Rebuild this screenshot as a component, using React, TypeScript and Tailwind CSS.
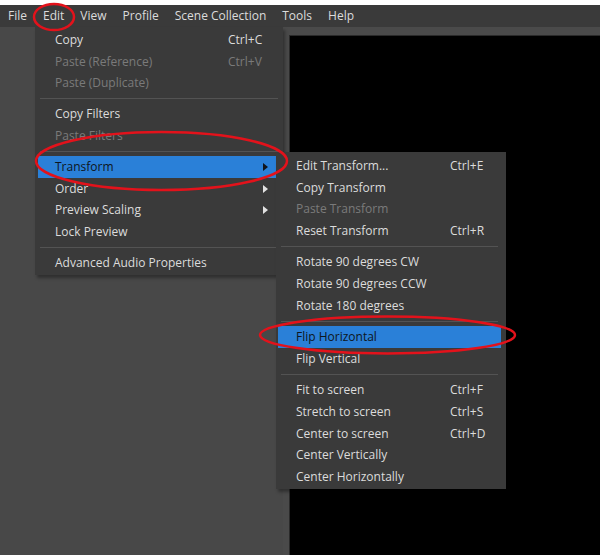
import React from "react";

type Item =
  | { sep: true }
  | { label: string; shortcut?: string; disabled?: boolean; active?: boolean; sub?: boolean; sep?: false };

const editItems: Item[] = [
  { label: "Copy", shortcut: "Ctrl+C" },
  { label: "Paste (Reference)", shortcut: "Ctrl+V", disabled: true },
  { label: "Paste (Duplicate)", disabled: true },
  { sep: true },
  { label: "Copy Filters" },
  { label: "Paste Filters", disabled: true },
  { sep: true },
  { label: "Transform", sub: true, active: true },
  { label: "Order", sub: true },
  { label: "Preview Scaling", sub: true },
  { label: "Lock Preview" },
  { sep: true },
  { label: "Advanced Audio Properties" },
];

const transformItems: Item[] = [
  { label: "Edit Transform...", shortcut: "Ctrl+E" },
  { label: "Copy Transform" },
  { label: "Paste Transform", disabled: true },
  { label: "Reset Transform", shortcut: "Ctrl+R" },
  { sep: true },
  { label: "Rotate 90 degrees CW" },
  { label: "Rotate 90 degrees CCW" },
  { label: "Rotate 180 degrees" },
  { sep: true },
  { label: "Flip Horizontal", active: true },
  { label: "Flip Vertical" },
  { sep: true },
  { label: "Fit to screen", shortcut: "Ctrl+F" },
  { label: "Stretch to screen", shortcut: "Ctrl+S" },
  { label: "Center to screen", shortcut: "Ctrl+D" },
  { label: "Center Vertically" },
  { label: "Center Horizontally" },
];

function Arrow({ dark }: { dark?: boolean }) {
  return (
    <svg width="5" height="8" viewBox="0 0 5 8" className="ml-auto mr-[15px]">
      <polygon points="0,0 5,4 0,8" fill={dark ? "#10151c" : "#e2e2e2"} />
    </svg>
  );
}

function Menu({
  items,
  rowMl,
  rowMr,
  textPl,
  textW,
  sepMl,
  sepMr,
  sepH,
}: {
  items: Item[];
  rowMl: string;
  rowMr: string;
  textPl: string;
  textW: string;
  sepMl: string;
  sepMr: string;
  sepH: string;
}) {
  return (
    <>
      {items.map((it, i) => {
        if ("sep" in it && it.sep) {
          return (
            <div key={i} className={`${sepH} flex items-center ${sepMl} ${sepMr}`}>
              <div className="h-px w-full bg-[#535353]" />
            </div>
          );
        }
        const item = it as Exclude<Item, { sep: true }>;
        const color = item.active
          ? "text-[#0e1620] bg-[#2a80d8]"
          : item.disabled
          ? "text-[#7a7a7a]"
          : "text-[#dcdcdc]";
        return (
          <div key={i} className={`h-[21.7px] flex items-center ${rowMl} ${rowMr} ${textPl} ${color}`}>
            <span className={`${textW} shrink-0 whitespace-nowrap`}>{item.label}</span>
            {item.shortcut && <span className="whitespace-nowrap">{item.shortcut}</span>}
            {item.sub && <Arrow dark={item.active} />}
          </div>
        );
      })}
    </>
  );
}

export default function App() {
  return (
    <div
      className="relative w-[600px] h-[555px] overflow-hidden bg-white text-[12px] leading-none"
      style={{ fontFamily: '"Open Sans", "Noto Sans", sans-serif' }}
    >
      <div className="h-[5px] bg-white" />
      <div className="h-[22px] bg-[#3a3a3a] flex items-center text-[#dcdcdc]">
        {["File", "Edit", "View", "Profile", "Scene Collection", "Tools", "Help"].map((m) => (
          <span key={m} className="px-2 whitespace-nowrap">
            {m}
          </span>
        ))}
      </div>
      <div className="flex h-[528px] bg-[#484848]">
        <div className="w-[283px] shrink-0" />
        <div className="flex-1 flex flex-col pt-[8px] pl-[6px] bg-[#4a4a4a]">
          <div className="flex-1 bg-black border-l border-t border-[#2a2a2a]" />
        </div>
      </div>

      {/* Edit menu */}
      <div className="absolute left-[35px] top-[27px] w-[248px] bg-[#3a3a3a] pt-[2px] pb-[1px] shadow-[2px_3px_3px_rgba(0,0,0,0.35)]">
        <Menu
          items={editItems}
          rowMl="ml-[3px]"
          rowMr="mr-0"
          textPl="pl-[17px]"
          textW="w-[173px]"
          sepMl="ml-[5px]"
          sepMr="mr-[5px]"
          sepH="h-[9.3px]"
        />
      </div>

      {/* Transform submenu */}
      <div className="absolute left-[276px] top-[152px] w-[230px] bg-[#3a3a3a] pt-[3px] pb-[1px] shadow-[2px_3px_3px_rgba(0,0,0,0.35)]">
        <Menu
          items={transformItems}
          rowMl="ml-[2px]"
          rowMr="mr-[5px]"
          textPl="pl-[18px]"
          textW="w-[154px]"
          sepMl="ml-[5px]"
          sepMr="mr-[8px]"
          sepH="h-[9.8px]"
        />
      </div>

      {/* red annotation ellipses */}
      <svg className="absolute inset-0 pointer-events-none" width="600" height="555" viewBox="0 0 600 555">
        <ellipse cx="54" cy="17" rx="20" ry="13" fill="none" stroke="#e3121b" strokeWidth="2.5" />
        <ellipse cx="161.5" cy="161" rx="125.5" ry="29" fill="none" stroke="#e3121b" strokeWidth="2.5" />
        <ellipse cx="387.5" cy="335" rx="127.5" ry="18.5" fill="none" stroke="#e3121b" strokeWidth="2.5" />
      </svg>
    </div>
  );
}
